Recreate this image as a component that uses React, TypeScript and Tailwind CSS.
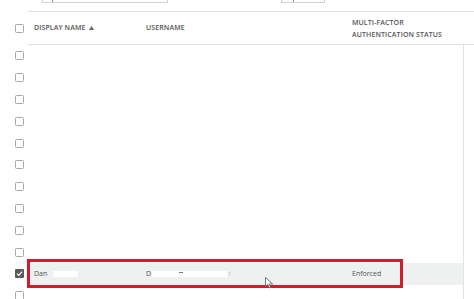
import React from "react";

function Box({ checked = false }: { checked?: boolean }) {
  if (checked) {
    return (
      <div className="w-[9px] h-[9px] rounded-[1px] bg-[#5a5a5a] flex items-center justify-center">
        <svg width="7" height="7" viewBox="0 0 10 10">
          <path d="M1.5 5.2 L4 7.6 L8.6 2.2" fill="none" stroke="#fff" strokeWidth="1.8" />
        </svg>
      </div>
    );
  }
  return <div className="w-[9px] h-[9px] rounded-[1.5px] border border-[#a8a8a8] bg-white" />;
}

const rows = Array.from({ length: 12 }, (_, i) => i);

export default function App() {
  return (
    <div className="w-[474px] h-[299px] overflow-hidden bg-white font-['Open_Sans',sans-serif] text-[#444]">
      {/* top filter inputs (mostly scrolled off) */}
      <div className="h-[11px] flex">
        <div className="ml-[42px] w-[126px] h-[3px] border-x border-b border-[#d0d0d0] relative">
          <div className="absolute left-[9px] top-0 w-[1px] h-[2px] bg-[#999]" />
        </div>
        <div className="ml-[113px] w-[44px] h-[3px] border-x border-b border-[#d0d0d0] relative">
          <div className="absolute left-[11px] top-0 w-[1px] h-[2px] bg-[#999]" />
        </div>
      </div>

      {/* header */}
      <div className="flex h-[34px]">
        <div className="w-[28px] flex items-center pl-[15px] pt-[1px]">
          <Box />
        </div>
        <div className="flex-1 border-y border-[#e3e3e3] flex items-center text-[7px] font-semibold tracking-[0.1px] text-[#555] leading-[11.5px]">
          <div className="w-[118px] pl-[6px] flex items-center gap-[4px]">
            <span>DISPLAY NAME</span>
            <svg width="5" height="4" viewBox="0 0 5 4">
              <path d="M0 4 L2.5 0 L5 4 Z" fill="#666" />
            </svg>
          </div>
          <div className="w-[206px]">USERNAME</div>
          <div className="flex flex-col pt-[1px]">
            <span>MULTI-FACTOR</span>
            <span>AUTHENTICATION STATUS</span>
          </div>
        </div>
      </div>

      {/* rows */}
      <div className="flex flex-col">
        {rows.map((i) => {
          const sel = i === 10;
          return (
            <div key={i} className="flex h-[21.8px]">
              <div className="w-[28px] flex items-center pl-[15px]">
                <Box checked={sel} />
              </div>
              <div
                className={
                  "w-[435px] relative flex items-center text-[7px] text-[#555] " +
                  (sel ? "bg-[#eff0f0]" : "")
                }
              >
                {sel && (
                  <>
                    <div className="w-[118px] pl-[6px] flex items-center">
                      <span>Dan</span>
                      <span className="ml-[6px] w-[25px] h-[6px] bg-white" />
                    </div>
                    <div className="w-[206px] flex items-center relative">
                      <span>D</span>
                      <span className="ml-[1px] w-[75px] h-[6px] bg-white" />
                      <span className="absolute left-[33px] top-[3px] w-[4px] h-[1px] bg-[#777]" />
                      <span className="ml-[2px] text-[6px]">:</span>
                    </div>
                    <div>Enforced</div>
                    <div className="absolute -left-[1px] -top-[4px] w-[376px] h-[29px] border-[3px] border-[#cc1f2b] pointer-events-none" />
                    <svg
                      className="absolute left-[237px] top-[14px]"
                      width="9"
                      height="12"
                      viewBox="0 0 9 12"
                    >
                      <path
                        d="M0.5 0.5 L0.5 9.5 L2.8 7.4 L4.4 11 L5.8 10.4 L4.3 6.9 L7.6 6.9 Z"
                        fill="#fff"
                        stroke="#555"
                        strokeWidth="0.8"
                        strokeLinejoin="round"
                      />
                    </svg>
                  </>
                )}
              </div>
              <div className="flex-1 border-l border-[#e3e3e3]" />
            </div>
          );
        })}
      </div>
    </div>
  );
}
